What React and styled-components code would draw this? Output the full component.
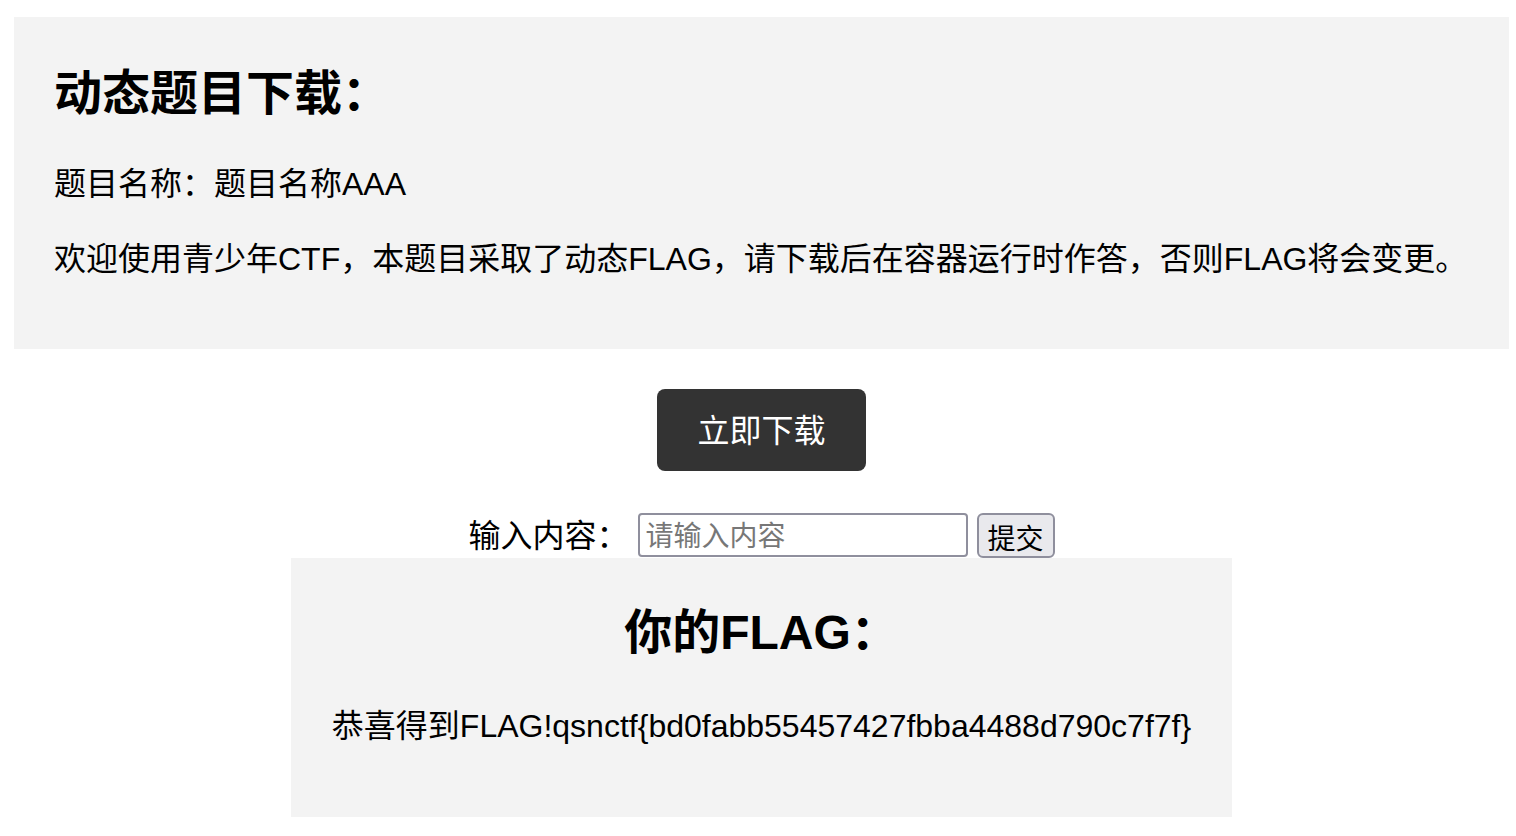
import React from 'react';
import styled, { createGlobalStyle } from 'styled-components';

const GlobalStyle = createGlobalStyle`
  body {
    margin: 0;
    background: #ffffff;
    font-family: "Liberation Sans", "Noto Sans CJK SC", sans-serif;
    color: #000000;
  }
`;

const Page = styled.div`
  padding: 17px 7px 20px 14px;
  display: flex;
  flex-direction: column;
  align-items: center;
`;

const Panel = styled.section`
  box-sizing: border-box;
  width: ${(p) => p.$width || '100%'};
  background-color: #f3f3f3;
  padding: ${(p) => (p.$compact ? '45px 40px 68px' : '47px 40px 67px')};
  text-align: ${(p) => (p.$center ? 'center' : 'left')};
`;

const Title = styled.h1`
  margin: 0;
  font-size: 48px;
  line-height: 60px;
  font-weight: bold;
`;

const Text = styled.p`
  margin: ${(p) => p.$gap || '30px'} 0 0;
  font-size: 32px;
  line-height: 45px;
  white-space: nowrap;
`;

const DownloadButton = styled.button`
  margin-top: 40px;
  background-color: #333333;
  color: #ffffff;
  border: none;
  border-radius: 8px;
  padding: 21px 40px 19px;
  font-family: inherit;
  font-size: 32px;
  line-height: 42px;
  cursor: pointer;
`;

const InputRow = styled.form`
  margin-top: 41px;
  display: flex;
  align-items: center;
  gap: 9px;
  height: 46px;
`;

const Label = styled.label`
  font-size: 32px;
  line-height: 46px;
  padding-top: 2px;
`;

const TextInput = styled.input`
  box-sizing: border-box;
  width: 330px;
  height: 44px;
  padding: 3px 6px 0;
  border: 2px solid #8f8f9d;
  border-radius: 4px;
  font-family: inherit;
  font-size: 28px;
  color: #000;

  &::placeholder {
    color: #777777;
  }
`;

const SubmitButton = styled.button`
  box-sizing: border-box;
  height: 45px;
  padding: 2px 9px 0;
  background-color: #e9e9ed;
  border: 2px solid #8f8f9d;
  border-radius: 6px;
  font-family: inherit;
  font-size: 28px;
  color: #000;
  cursor: pointer;
`;

export default function App() {
  return (
    <>
      <GlobalStyle />
      <Page>
        {/* Challenge info */}
        <Panel>
          <Title>动态题目下载：</Title>
          <Text $gap="38px">题目名称：题目名称AAA</Text>
          <Text>
            欢迎使用青少年CTF，本题目采取了动态FLAG，请下载后在容器运行时作答，否则FLAG将会变更。
          </Text>
        </Panel>

        <DownloadButton type="button">立即下载</DownloadButton>

        {/* Answer form */}
        <InputRow onSubmit={(e) => e.preventDefault()}>
          <Label htmlFor="answer">输入内容：</Label>
          <TextInput id="answer" type="text" placeholder="请输入内容" />
          <SubmitButton type="submit">提交</SubmitButton>
        </InputRow>

        {/* Result */}
        <Panel $width="941px" $center $compact>
          <Title>你的FLAG：</Title>
          <Text $gap="41px">恭喜得到FLAG!qsnctf&#123;bd0fabb55457427fbba4488d790c7f7f&#125;</Text>
        </Panel>
      </Page>
    </>
  );
}
